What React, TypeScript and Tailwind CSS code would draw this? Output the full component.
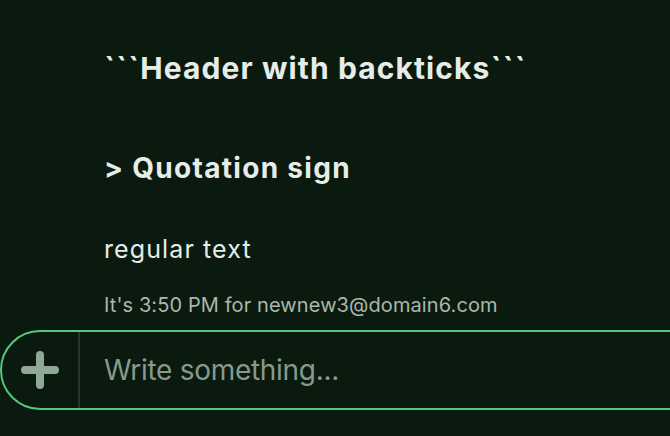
export default function App() {
  return (
    <div
      className="w-[670px] h-[436px] overflow-hidden bg-[#0b1a0f] text-[#e6ece7] flex flex-col"
      style={{ fontFamily: "Inter, 'Noto Sans', sans-serif" }}
    >
      <div className="pl-[104px] pt-[50px] flex flex-col">
        <h2 className="text-[30px] leading-[36px] font-bold tracking-[1.1px]">```Header with backticks```</h2>
        <h3 className="mt-[65px] text-[28px] leading-[34px] font-bold tracking-[1.3px]">&gt; Quotation sign</h3>
        <p className="mt-[49px] text-[25px] leading-[30px] tracking-[1.1px]">regular text</p>
        <p className="mt-[29px] text-[20px] leading-[24px] tracking-[0.1px] text-[#a9b7ac]">It's 3:50 PM for newnew3@domain6.com</p>
      </div>
      <div className="mt-[13px] h-[80px] w-[720px] flex items-stretch rounded-l-[40px] border-2 border-[#55c77a]">
        <button className="w-[78px] flex items-center justify-center border-r-2 border-[#24382a]">
          <svg width="38" height="38" viewBox="0 0 38 38">
            <path d="M19 4v30M4 19h30" stroke="#8fa898" strokeWidth="8" strokeLinecap="round" />
          </svg>
        </button>
        <div className="flex items-center pl-[24px] text-[28px] tracking-[-0.3px] text-[#869a8c]">Write something...</div>
      </div>
    </div>
  );
}
